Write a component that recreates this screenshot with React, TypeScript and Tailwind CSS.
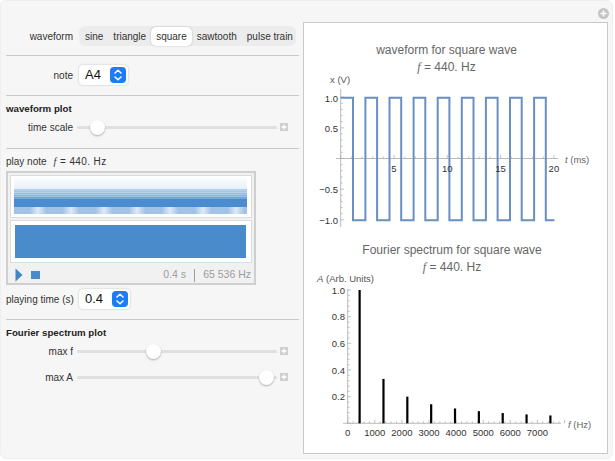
import React from "react";

const font = { fontFamily: '"Liberation Sans", Arial, sans-serif' };

function Sep({ className = "" }: { className?: string }) {
  return <div className={"h-px bg-[#c9c9c9] w-[293px] " + className} />;
}

function Plus() {
  return (
    <svg width="8" height="8" viewBox="0 0 8 8" className="shrink-0 ml-[3px]">
      <rect width="8" height="8" fill="#cfcfcf" />
      <path d="M4 1.5v5M1.5 4h5" stroke="#fff" strokeWidth="1.3" />
    </svg>
  );
}

function Slider({ label, pos }: { label: string; pos: number }) {
  return (
    <div className="flex items-center h-[16px]">
      <div className="w-[67px] text-right text-[10px] text-[#333] shrink-0 whitespace-nowrap">{label}</div>
      <div className="relative ml-[4px] w-[200px] h-[3px] rounded-full bg-[#e0e0e0]">
        <div
          className="absolute top-[-6px] w-[15px] h-[15px] rounded-full bg-white shadow-[0_1px_2px_rgba(0,0,0,0.3)]"
          style={{ left: pos }}
        />
      </div>
      <Plus />
    </div>
  );
}

function Select({ value, w }: { value: string; w: number }) {
  return (
    <div
      className="flex items-center justify-between h-[20px] rounded-[4px] bg-white shadow-[0_0_2px_rgba(0,0,0,0.25)] pl-[6px] pr-[2px]"
      style={{ width: w }}
    >
      <span className="text-[13px] text-[#111]">{value}</span>
      <span className="w-[16px] h-[16px] rounded-[4px] bg-[#1a7df5] flex items-center justify-center">
        <svg width="10" height="14" viewBox="0 0 10 14" fill="none" stroke="#fff" strokeWidth="1.5" strokeLinecap="round" strokeLinejoin="round">
          <path d="M2 5l3-2.8L8 5M2 9l3 2.8L8 9" />
        </svg>
      </span>
    </div>
  );
}

function Segments() {
  const items = ["sine", "triangle", "square", "sawtooth", "pulse train"];
  return (
    <div className="flex items-center w-[217px] h-[20px] rounded-[6px] bg-[#ececec] text-[10px] text-[#333] whitespace-nowrap pl-[1px]">
      {items.map((t, i) => (
        <React.Fragment key={t}>
          {i === 2 ? (
            <div className="h-[19px] px-[5px] rounded-[5px] bg-white shadow-[0_0_2px_rgba(0,0,0,0.25)] flex items-center">{t}</div>
          ) : (
            <div className="h-full px-[5px] flex items-center">{t}</div>
          )}
          {(i === 0 || i === 3) && <div className="w-px h-[10px] bg-[#d4d4d4]" />}
        </React.Fragment>
      ))}
    </div>
  );
}

function Spectrogram() {
  const stripes = [
    ["#b4cfea", 2], ["#a5c5e7", 1], ["#b9d3ed", 1], ["#97bce3", 1], ["#acc9e9", 1],
    ["#88b2df", 1], ["#9dc0e5", 1], ["#75a6d9", 2], ["#4a8ccb", 1], ["#5a96d1", 1],
  ] as [string, number][];
  let y = 13;
  const spots = [0, 1, 2, 3, 4, 5, 6];
  return (
    <svg width="240" height="41" viewBox="0 0 240 41" className="block">
      <defs>
        <linearGradient id="fade" x1="0" y1="0" x2="0" y2="1">
          <stop offset="0" stopColor="#ffffff" />
          <stop offset="1" stopColor="#e6eff8" />
        </linearGradient>
        <linearGradient id="spot" x1="0" y1="0" x2="1" y2="0">
          <stop offset="0" stopColor="#9dbfe3" />
          <stop offset="0.5" stopColor="#dfeaf6" />
          <stop offset="1" stopColor="#9dbfe3" />
        </linearGradient>
      </defs>
      <rect x="3" y="0" width="233" height="13" fill="url(#fade)" />
      {stripes.map(([c, h], i) => {
        const r = <rect key={i} x="3" y={y} width="233" height={h} fill={c} />;
        y += h;
        return r;
      })}
      <rect x="3" y="24" width="233" height="7" fill="#4a8ccf" />
      <rect x="3" y="31" width="233" height="7" fill="#a2c3e5" />
      {spots.map((i) => (
        <rect key={i} x={18 + i * 33} y="31" width="18" height="7" fill="url(#spot)" />
      ))}
    </svg>
  );
}

function WavePlot() {
  const x0 = 340.7;
  const top = 97.7;
  const bot = 220.3;
  let d = `M${x0} ${top}`;
  for (let i = 0; i < 9; i++) {
    const fall = 353 + i * 24.1;
    d += `H${fall}V${bot}`;
    if (i < 8) {
      const rise = 365.4 + i * 24.1;
      d += `H${rise}V${top}`;
    }
  }
  d += "H554.5";
  const xt = (v: number) => x0 + (v * 213.2) / 20;
  const yt = (v: number) => 158.5 - v * 61.3;
  return (
    <svg width="303" height="209" viewBox="304 23 303 209" className="block" fontFamily='"Liberation Sans", Arial, sans-serif'>
      <text x="446.5" y="54" textAnchor="middle" fontSize="12" fill="#666">waveform for square wave</text>
      <text x="446.5" y="71" textAnchor="middle" fontSize="12" fill="#666"><tspan fontStyle="italic" fontFamily='"Liberation Serif", serif'>f</tspan> = 440. Hz</text>
      <text x="330" y="83" fontSize="9.5" fill="#555">x (V)</text>
      <path d={`M340.7 89V227M336 158.5H558`} stroke="#aaa" strokeWidth="0.8" fill="none" />
      {[...Array(21)].map((_, i) => (
        <path key={i} d={`M${xt(i)} 158.5v${i % 5 === 0 ? -3.5 : -2}`} stroke="#aaa" strokeWidth="0.7" />
      ))}
      {[...Array(21)].map((_, i) => (
        <path key={i} d={`M340.7 ${yt(-1 + i * 0.1)}h${i % 5 === 0 ? 3.5 : 2}`} stroke="#aaa" strokeWidth="0.7" />
      ))}
      <path d={d} fill="none" stroke="#6a8fc0" strokeWidth="2" />
      {[5, 10, 15, 20].map((v) => (
        <text key={v} x={xt(v)} y="171.5" textAnchor="middle" fontSize="9.5" fill="#333">{v}</text>
      ))}
      {[["1.0", 98], ["0.5", 128.5], ["\u22120.5", 189.5], ["\u22121.0", 220.5]].map(([t, y]) => (
        <text key={t as string} x="338" y={(y as number) + 3.5} textAnchor="end" fontSize="9.5" fill="#333">{t}</text>
      ))}
      <text x="565" y="163" fontSize="9.5" fill="#666"><tspan fontStyle="italic">t</tspan> (ms)</text>
    </svg>
  );
}

function SpecPlot() {
  const x0 = 347.7;
  const y0 = 423.3;
  const sc = 133.3;
  const xt = (v: number) => x0 + v * 0.0271;
  const bars = [1, 3, 5, 7, 9, 11, 13, 15, 17];
  return (
    <svg width="303" height="221" viewBox="304 232 303 221" className="block" fontFamily='"Liberation Sans", Arial, sans-serif'>
      <text x="452" y="254" textAnchor="middle" fontSize="12" fill="#666">Fourier spectrum for square wave</text>
      <text x="452" y="271" textAnchor="middle" fontSize="12" fill="#666"><tspan fontStyle="italic" fontFamily='"Liberation Serif", serif'>f</tspan> = 440. Hz</text>
      <text x="317" y="282" fontSize="9.5" fill="#555"><tspan fontStyle="italic">A</tspan> (Arb. Units)</text>
      <path d="M347.7 289V423.3M343 423.3H561" stroke="#aaa" strokeWidth="0.8" fill="none" />
      {[...Array(41)].map((_, i) => (
        <path key={i} d={`M${xt(i * 200)} 423.3v${i % 5 === 0 ? -3.5 : -2}`} stroke="#aaa" strokeWidth="0.7" />
      ))}
      {[...Array(26)].map((_, i) => (
        <path key={i} d={`M347.7 ${y0 - i * 5.33}h${i % 5 === 0 ? 3.5 : 2}`} stroke="#aaa" strokeWidth="0.7" />
      ))}
      {bars.map((n) => (
        <rect key={n} x={xt(440 * n) - 1.1} y={y0 - sc / n} width="2.2" height={sc / n} fill="#000" />
      ))}
      {[0, 1000, 2000, 3000, 4000, 5000, 6000, 7000].map((v) => (
        <text key={v} x={xt(v)} y="436" textAnchor="middle" fontSize="9.5" fill="#333">{v}</text>
      ))}
      {["1.0", "0.8", "0.6", "0.4", "0.2"].map((t, i) => (
        <text key={t} x="345" y={293.5 + i * 26.7} textAnchor="end" fontSize="9.5" fill="#333">{t}</text>
      ))}
      <text x="568" y="428" fontSize="9.5" fill="#666"><tspan fontStyle="italic">f</tspan> (Hz)</text>
    </svg>
  );
}

export default function App() {
  return (
    <div className="w-[615px] h-[461px] bg-white overflow-hidden" style={font}>
      <div className="relative w-[613px] h-[459px] bg-[#f6f6f6] rounded-[6px] flex border border-[#efefef]">
        <div className="w-[302px] pl-[5px] pt-[25px] shrink-0">
          <div className="flex items-center gap-[6px]">
            <div className="w-[67px] text-right text-[10px] text-[#333]">waveform</div>
            <Segments />
          </div>
          <Sep className="mt-[9px]" />
          <div className="flex items-center gap-[6px] mt-[9px]">
            <div className="w-[67px] text-right text-[10px] text-[#333]">note</div>
            <Select value="A4" w={49} />
          </div>
          <Sep className="mt-[10px]" />
          <div className="mt-[6px] text-[9.7px] font-bold text-[#222] leading-[13px]">waveform plot</div>
          <div className="mt-[4px]"><Slider label="time scale" pos={13} /></div>
          <Sep className="mt-[13px]" />
          <div className="mt-[6px] text-[10px] text-[#333] leading-[13px] whitespace-nowrap">
            play note
            <span className="ml-[7px] tracking-[0.4px]">
              <span className="italic" style={{ fontFamily: '"Liberation Serif", serif' }}>f</span> = 440. Hz
            </span>
          </div>
          <div className="mt-[3px] w-[250px] h-[114px] border-2 border-[#cfcfcf] bg-[#f1f1f1] px-[2px] pt-[2px]">
            <div className="w-[242px] h-[43px] bg-white border border-[#dcdcdc]">
              <Spectrogram />
            </div>
            <div className="mt-[2px] w-[242px] h-[43px] bg-white border border-[#dcdcdc] px-[4px] pt-[4px]">
              <div className="w-[231px] h-[33px] bg-[#4a8ccb]" />
            </div>
            <div className="flex items-center h-[20px] mt-[2px] pl-[5px] pr-[1px]">
              <svg width="8" height="14" viewBox="0 0 8 14"><path d="M0.5 0.5L7.5 7L0.5 13.5Z" fill="#3f86c9" /></svg>
              <div className="ml-[8px] w-[9px] h-[8px] bg-[#4a8ccb]" />
              <div className="ml-auto flex items-center text-[10.5px] text-[#9c9c9c] whitespace-nowrap">
                <span>0.4 s</span>
                <span className="w-px h-[13px] bg-[#9c9c9c] mx-[8px]" />
                <span>65 536 Hz</span>
              </div>
            </div>
          </div>
          <div className="flex items-center mt-[4px]">
            <div className="w-[73px] text-[10px] text-[#333] whitespace-nowrap">playing time (s)</div>
            <Select value="0.4" w={51} />
          </div>
          <Sep className="mt-[10px]" />
          <div className="mt-[6px] text-[9.7px] font-bold text-[#222] leading-[13px]">Fourier spectrum plot</div>
          <div className="mt-[4px]"><Slider label="max f" pos={69} /></div>
          <div className="mt-[10px]"><Slider label="max A" pos={182} /></div>
        </div>
        <div className="mt-[21px] w-[305px] h-[432px] bg-white border border-[#c9c9c9] flex flex-col">
          <WavePlot />
          <SpecPlot />
        </div>
        <svg width="11" height="11" viewBox="0 0 11 11" className="absolute right-[3px] top-[7px]">
          <circle cx="5.5" cy="5.5" r="5.5" fill="#c4c4c4" />
          <path d="M5.5 2.5v6M2.5 5.5h6" stroke="#fff" strokeWidth="1.6" />
        </svg>
      </div>
    </div>
  );
}
